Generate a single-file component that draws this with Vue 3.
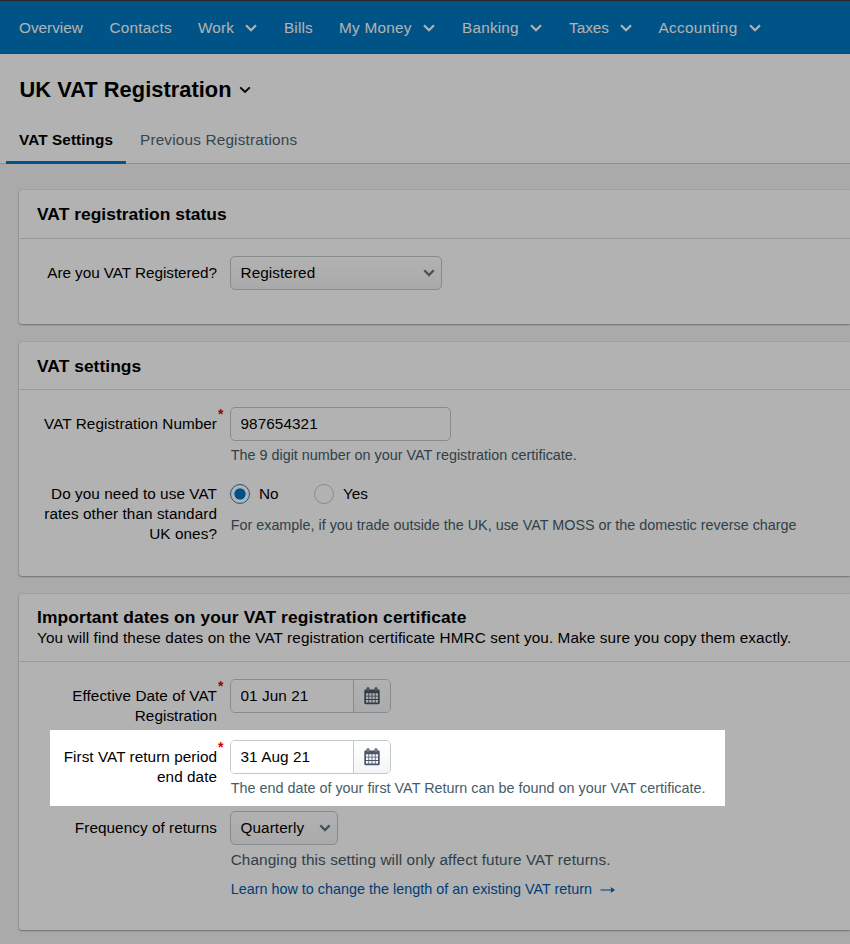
<script setup>
const nav = [
  { label: 'Overview', cls: 'overview' },
  { label: 'Contacts', cls: 'contacts' },
  { label: 'Work', cls: 'work', menu: true },
  { label: 'Bills', cls: 'bills' },
  { label: 'My Money', cls: 'money', menu: true },
  { label: 'Banking', cls: 'banking', menu: true },
  { label: 'Taxes', cls: 'taxes', menu: true },
  { label: 'Accounting', cls: 'accounting', menu: true },
]
const dates = [
  { label: ['Effective Date of VAT', 'Registration'], value: '01 Jun 21', cls: 'effective' },
  {
    label: ['First VAT return period', 'end date'],
    value: '31 Aug 21',
    hint: 'The end date of your first VAT Return can be found on your VAT certificate.',
    cls: 'first',
  },
]
</script>

<template>
  <div class="page">
    <nav class="nav">
      <a v-for="item in nav" :key="item.label" :class="['nav-item', item.cls]">
        <span>{{ item.label }}</span>
        <svg v-if="item.menu" class="nav-chev" viewBox="0 0 12 8"><path d="M1 1.200 6 6.200l5-5" /></svg>
      </a>
    </nav>

    <header class="head">
      <h1>
        UK VAT Registration
        <svg class="title-chev" viewBox="0 0 12 8"><path d="M1.200 1.400 6 6l4.800-4.600" /></svg>
      </h1>
      <div class="tabs">
        <a class="tab active">VAT Settings</a>
        <a class="tab previous">Previous Registrations</a>
      </div>
    </header>

    <main>
      <section class="card status">
        <div class="card-head"><h2>VAT registration status</h2></div>
        <div class="card-body">
          <div class="row">
            <label class="plain">Are you VAT Registered?</label>
            <div class="field">
              <div class="select wide">
                <span>Registered</span>
                <svg class="sel-chev" viewBox="0 0 12 8"><path d="M1.300 1.300 6 6l4.700-4.700" /></svg>
              </div>
            </div>
          </div>
        </div>
      </section>

      <section class="card settings">
        <div class="card-head"><h2>VAT settings</h2></div>
        <div class="card-body">
          <div class="row number">
            <label>VAT Registration Number<b class="req">*</b></label>
            <div class="field">
              <input class="input" type="text" value="987654321" />
              <p class="hint">The 9 digit number on your VAT registration certificate.</p>
            </div>
          </div>
          <div class="row rates">
            <label>Do you need to use VAT<br />rates other than standard<br />UK ones?</label>
            <div class="field">
              <div class="radios">
                <span class="radio on"></span><span class="no">No</span>
                <span class="radio"></span><span>Yes</span>
              </div>
              <p class="hint example">For example, if you trade outside the UK, use VAT MOSS or the domestic reverse charge</p>
            </div>
          </div>
        </div>
      </section>

      <section class="card dates">
        <div class="card-head tall">
          <h2>Important dates on your VAT registration certificate</h2>
          <p>You will find these dates on the VAT registration certificate HMRC sent you. Make sure you copy them exactly.</p>
        </div>
        <div class="card-body">
          <div v-for="d in dates" :key="d.value" :class="['row', d.cls]">
            <label>{{ d.label[0] }}<b class="req">*</b><br />{{ d.label[1] }}</label>
            <div class="field">
              <div class="date">
                <input type="text" :value="d.value" />
                <span class="cal">
                  <svg viewBox="0 0 16 18">
                    <path class="cal-body" d="M1.500 2.500h13a1.200 1.200 0 0 1 1.200 1.200v12.300a1.200 1.200 0 0 1-1.200 1.200h-13a1.200 1.200 0 0 1-1.200-1.200V3.700A1.200 1.200 0 0 1 1.500 2.500z" />
                    <path class="cal-ring" d="M2.900 .8h2.200v3.400H2.900zM10.900 .8h2.200v3.400h-2.200z" />
                    <path class="cal-cell" d="M2 6.300h2.400v2.500H2zM5.200 6.300h2.400v2.500H5.200zM8.400 6.300h2.400v2.500H8.400zM11.600 6.300H14v2.500h-2.400zM2 9.600h2.400v2.500H2zM5.200 9.600h2.400v2.500H5.200zM8.400 9.600h2.400v2.500H8.400zM11.600 9.600H14v2.500h-2.400zM2 12.900h2.400v2.500H2zM5.200 12.900h2.400v2.500H5.200zM8.400 12.900h2.400v2.500H8.400zM11.600 12.900H14v2.500h-2.400z" />
                  </svg>
                </span>
              </div>
              <p v-if="d.hint" class="hint">{{ d.hint }}</p>
            </div>
          </div>
          <div class="row frequency">
            <label>Frequency of returns</label>
            <div class="field">
              <div class="select">
                <span>Quarterly</span>
                <svg class="sel-chev" viewBox="0 0 12 8"><path d="M1.300 1.300 6 6l4.700-4.700" /></svg>
              </div>
              <p class="hint note">Changing this setting will only affect future VAT returns.</p>
              <a class="link">
                <span>Learn how to change the length of an existing VAT return</span>
                <svg viewBox="0 0 16 8"><path class="shaft" d="M.5 4h12.500" /><path class="tip" d="M10.500 1 15 4l-4.500 3 1-3z" /></svg>
              </a>
            </div>
          </div>
        </div>
      </section>
    </main>

    <div class="spotlight"></div>
  </div>
</template>

<style>
body {
  overflow: hidden;
}
</style>

<style scoped>
* {
  box-sizing: border-box;
}
.page {
  position: relative;
  width: 850px;
  height: 944px;
  overflow: hidden;
  background: #f4f4f4;
  color: #000;
  font: 15.3px/20px "Liberation Sans", Arial, sans-serif;
  white-space: nowrap;
}
svg {
  display: block;
  fill: none;
  flex: none;
}
.nav {
  display: flex;
  align-items: center;
  height: 54px;
  padding: 1px 0 0 19px;
  background: #0077c0;
  border-top: 1px solid #36393c;
  border-bottom: 1px solid #1d649c;
  color: #fff;
}
.nav-item {
  display: flex;
  align-items: center;
}
.nav-chev {
  width: 12px;
  height: 8px;
  margin: 1px 0 0 11px;
  stroke: #fff;
  stroke-width: 2.200;
}
.overview { width: 90.500px; }
.contacts { width: 88.500px; letter-spacing: .25px; }
.work { width: 86px; letter-spacing: .15px; }
.bills { width: 55px; letter-spacing: .15px; }
.money { width: 123px; letter-spacing: .27px; }
.banking { width: 107px; letter-spacing: .22px; }
.taxes { width: 89.500px; }
.accounting { letter-spacing: .33px; }
.head {
  height: 110px;
  padding: 21px 0 0 6px;
  background: #fff;
  border-bottom: 1px solid #ccd2d8;
}
h1 {
  display: flex;
  align-items: center;
  margin: 0 0 0 13.500px;
  font-size: 21.800px;
  line-height: 30px;
  letter-spacing: .05px;
}
.title-chev {
  width: 12px;
  height: 8px;
  margin: 0 0 0 7px;
  stroke: #000;
  stroke-width: 1.900;
}
.tabs {
  display: flex;
  margin-top: 14px;
}
.tab {
  height: 45px;
  padding: 11px 13px 0;
  color: #4c6470;
}
.active {
  width: 120px;
  margin-right: 1px;
  color: #000;
  font-weight: bold;
  letter-spacing: .1px;
  border-bottom: 3px solid #0078c8;
}
.previous {
  letter-spacing: .19px;
}
.card {
  margin-left: 19px;
  background: #fff;
  border-radius: 3px 0 0 3px;
  box-shadow: 0 0 0 1px rgba(0, 20, 30, .04), 0 1px 2px rgba(0, 30, 40, .36);
}
.status {
  height: 134px;
  margin-top: 26px;
}
.settings {
  height: 234px;
  margin-top: 18px;
}
.dates {
  height: 336px;
  margin-top: 18px;
}
.card-head {
  height: 49px;
  padding: 14px 18px 0;
  border-bottom: 1px solid #d8dcde;
}
.settings .card-head { height: 48px; }
.card-head.tall {
  height: 68px;
  padding-top: 13px;
}
h2 {
  margin: 0;
  font-size: 17.400px;
  line-height: 20px;
  letter-spacing: .04px;
}
.tall h2 { letter-spacing: .115px; }
.card-head p {
  margin: 1px 0 0;
  letter-spacing: .11px;
}
.card-body {
  padding-top: 17px;
}
.row {
  display: grid;
  grid-template-columns: 198px 1fr;
  column-gap: 13px;
}
label {
  padding-top: 7px;
  text-align: right;
  letter-spacing: .05px;
}
.plain { letter-spacing: -.05px; }
.rates label {
  padding-top: 0;
  letter-spacing: .07px;
}
.req {
  display: inline-block;
  width: 0;
  color: #e00000;
  font-size: 14px;
  line-height: 10px;
  transform: translate(1px, -10px);
}
.number { height: 77px; }
.effective { height: 61px; }
.first { height: 71px; }
.select,
.input,
.date {
  display: flex;
  align-items: center;
  height: 34px;
  border: 1px solid #bfc8cc;
  border-radius: 5px;
  letter-spacing: .08px;
}
.select {
  width: 108px;
  justify-content: space-between;
  padding: 0 6px 0 9.500px;
  background: linear-gradient(#fff, #f3f3f5);
}
.wide { width: 212px; }
.sel-chev {
  width: 12px;
  height: 8px;
  stroke: #62757f;
  stroke-width: 2.300;
}
input {
  font: inherit;
  letter-spacing: inherit;
  color: #000;
  background: #fff;
  outline: none;
}
.input {
  width: 221px;
  padding: 0 9px 0 9.500px;
  letter-spacing: .08px;
}
.date {
  width: 161px;
  overflow: hidden;
}
.date input {
  width: 122px;
  height: 32px;
  padding: 0 9px 0 9.500px;
  border: 0;
}
.cal {
  display: flex;
  flex: 1;
  height: 32px;
  align-items: center;
  justify-content: center;
  border-left: 1px solid #bfc8cc;
  background: linear-gradient(#fff, #f4f5f6);
}
.cal svg {
  width: 16px;
  height: 18px;
}
.cal-body { fill: #4b5669; }
.cal-ring { fill: #8791a0; stroke: #4b5669; stroke-width: .7; }
.cal-cell { fill: #f8f9fa; }
.hint {
  margin: 4px 0 0 .7px;
  font-size: 14.370px;
  letter-spacing: .01px;
  color: #455c68;
}
.radios {
  display: flex;
  align-items: center;
  height: 20px;
}
.radio {
  width: 20px;
  height: 20px;
  margin-right: 9px;
  border: 1px solid #bfc8cc;
  border-radius: 50%;
}
.on {
  border-color: #2180ca;
  background: radial-gradient(circle, #0075c4 5.200px, #fff 6px);
}
.no { width: 55px; }
.example {
  margin-top: 11px;
  letter-spacing: 0;
}
.note {
  margin-top: 5px;
  font-size: 15.300px;
  letter-spacing: .12px;
}
.link {
  display: flex;
  align-items: center;
  margin: 9px 0 0 .7px;
  color: #0059ad;
  font-size: 14.370px;
  letter-spacing: .01px;
}
.link svg {
  width: 16px;
  height: 8px;
  margin: 1px 0 0 8px;
}
.shaft { stroke: #0059ad; }
.tip { fill: #0059ad; }
.spotlight {
  position: absolute;
  left: 50px;
  top: 730px;
  width: 675px;
  height: 76px;
  box-shadow: 0 0 0 1000px rgba(0, 0, 0, .3);
  pointer-events: none;
}
</style>
